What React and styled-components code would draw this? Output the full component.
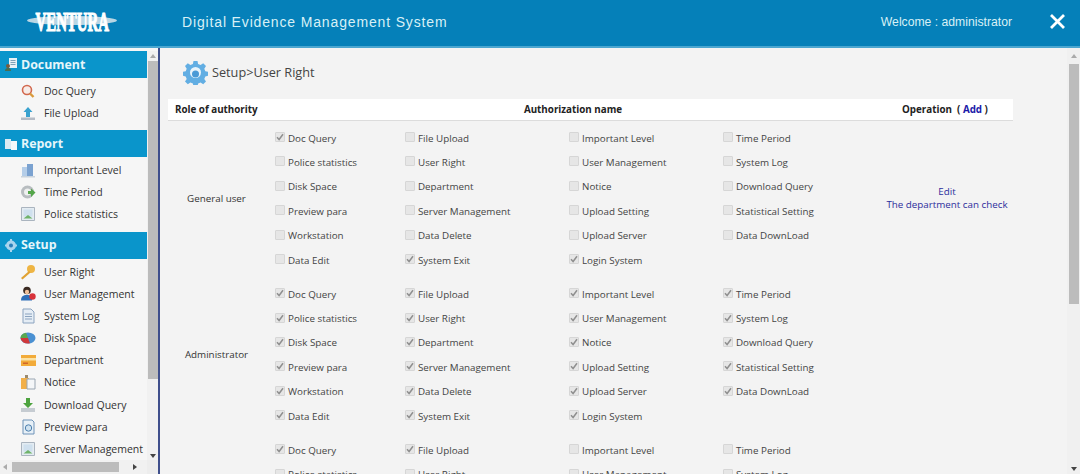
import React from 'react'
import styled, { createGlobalStyle } from 'styled-components'

const GlobalStyle = createGlobalStyle`
  html, body {
    margin: 0;
    height: 100%;
    overflow: hidden;
    background: #f3f3f3;
  }
  * {
    box-sizing: border-box;
  }
`

const Page = styled.div`
  width: 1080px;
  height: 474px;
  display: flex;
  flex-direction: column;
  overflow: hidden;
  font-family: "Open Sans", "Noto Sans", sans-serif;
  color: #333;
`

const Header = styled.header`
  height: 48px;
  flex-shrink: 0;
  display: flex;
  align-items: center;
  padding: 0 14px 3px 27px;
  background: #0580b9;
  border-bottom: 2px solid #4ba6d0;
  color: #d8f0f6;
`

const Logo = styled.div`
  position: relative;
  width: 90px;
  height: 22px;
  margin-right: 65px;
  display: flex;
  align-items: center;
  justify-content: center;

  &::before {
    content: '';
    position: absolute;
    left: 0;
    right: 0;
    top: 5px;
    height: 9px;
    border-radius: 50%;
    background: #b9d6e4;
  }
`

const LogoText = styled.span`
  position: relative;
  flex-shrink: 0;
  font-family: "Liberation Serif", serif;
  font-weight: bold;
  font-size: 28px;
  line-height: 22px;
  color: #fff;
  transform: scaleX(0.53);
  -webkit-text-stroke: 1.2px #fff;
`

const AppTitle = styled.h1`
  flex: 1;
  margin: 0;
  font-family: "Liberation Sans", sans-serif;
  font-size: 14px;
  font-weight: normal;
  letter-spacing: 0.85px;
`

const Welcome = styled.span`
  font-family: "Liberation Sans", sans-serif;
  font-size: 12.2px;
  margin-right: 37px;
`

const CloseIcon = styled.svg`
  width: 17px;
  height: 17px;
  display: block;
`

const Body = styled.div`
  flex: 1;
  min-height: 0;
  display: flex;
`

const Sidebar = styled.aside`
  width: 160px;
  flex-shrink: 0;
  display: grid;
  grid-template-columns: 147px 11px;
  grid-template-rows: 1fr 14px;
  border-right: 2px solid #3f4f8c;
  background: #f6f6f6;
  padding-top: 3px;
`

const SideList = styled.nav`
  overflow: hidden;
  min-height: 0;
`

const SectionHead = styled.div`
  height: 27px;
  display: flex;
  align-items: center;
  gap: 3px;
  padding: 0 0 1px 4px;
  background: #0a95cb;
  color: #e6f6fa;
  font-size: 12.4px;
  font-weight: 700;
`

const SectionBody = styled.div`
  padding: 1.5px 0 6.5px;
`

const SideItem = styled.div`
  height: 22.2px;
  display: flex;
  align-items: center;
  padding-left: 19px;
  gap: 7px;
  font-size: 10.5px;
  white-space: nowrap;
`

const ItemIcon = styled.svg`
  width: 18px;
  height: 16px;
  flex-shrink: 0;
  display: block;
`

const HeadIcon = styled.svg`
  width: 14px;
  height: 14px;
  flex-shrink: 0;
  display: block;
`

const VTrack = styled.div`
  display: flex;
  flex-direction: column;
  align-items: center;
  background: #f1f1f1;
`

const HTrack = styled.div`
  display: flex;
  align-items: center;
  background: #f1f1f1;
  padding: 0 7px 0 3px;
`

const VThumb = styled.div`
  width: 10px;
  height: ${p => p.$size}px;
  background: #bcbcbc;
  flex-shrink: 0;
`

const HThumb = styled.div`
  width: 107px;
  height: 10px;
  margin: 0 14px 0 5px;
  background: #bcbcbc;
`

const ArrowUp = styled.span`
  width: 0;
  height: 0;
  margin: ${p => p.$gap}px 0;
  border: 3px solid transparent;
  border-top: 0;
  border-bottom: 4px solid ${p => p.$dim ? '#aaa' : '#555'};
`

const ArrowDown = styled.span`
  width: 0;
  height: 0;
  margin-top: auto;
  margin-bottom: ${p => p.$gap}px;
  border: 3px solid transparent;
  border-bottom: 0;
  border-top: 4px solid #444;
`

const ArrowSide = styled.span`
  width: 0;
  height: 0;
  border: 3px solid transparent;
  ${p => p.$left
    ? 'border-left: 0; border-right: 4px solid #aaa;'
    : 'border-right: 0; border-left: 4px solid #444;'}
`

const Corner = styled.div`
  background: #ededed;
`

const Main = styled.main`
  flex: 1;
  min-width: 0;
  display: flex;
  background: #f3f3f3;
`

const Content = styled.div`
  width: 907px;
  flex-shrink: 0;
  padding: 0 0 0 8px;
  overflow: hidden;
`

const PageTitle = styled.div`
  height: 51px;
  display: flex;
  align-items: center;
  gap: 4px;
  padding: 0 0 3px 15px;
  font-size: 12.7px;
  color: #444;
`

const GearIcon = styled.svg`
  width: 25px;
  height: 25px;
  display: block;
`

const Table = styled.div`
  width: 845px;
`

const TableHead = styled.div`
  height: 22px;
  display: grid;
  grid-template-columns: 97px 616px 132px;
  align-items: center;
  background: #fff;
  border-bottom: 1px solid #dcdcdc;
  font-size: 9.8px;
  font-weight: 700;
  color: #222;
  white-space: nowrap;
`

const HeadCell = styled.div`
  text-align: ${p => p.$left ? 'left' : 'center'};
  padding-left: ${p => p.$left ? '7px' : '0'};
  padding-right: ${p => p.$inset || 0}px;
`

const AddLink = styled.span`
  color: #1a1aa8;
`

const Group = styled.div`
  display: grid;
  grid-template-columns: 97px 616px 132px;
  align-items: center;
  padding: 4.9px 0;

  &:first-of-type {
    padding-top: 6px;
  }
`

const RoleName = styled.div`
  text-align: center;
  font-size: 9.8px;
  padding-bottom: 2px;
`

const PermGrid = styled.div`
  display: grid;
  grid-template-columns: 130px 164px 154px 158px;
  grid-auto-rows: 24.4px;
  padding-left: 10px;
`

const Perm = styled.label`
  display: flex;
  align-items: center;
  gap: 3px;
  font-size: 9.8px;
  color: #444;
  white-space: nowrap;
`

const Box = styled.span`
  width: 10px;
  height: 10px;
  margin-top: -2px;
  flex-shrink: 0;
  display: flex;
  align-items: center;
  justify-content: center;
  background: #e6e6e6;
  border: 1px solid #d6d6d6;
  border-radius: 1px;
`

const OpCell = styled.div`
  text-align: center;
  font-size: 9.8px;
  line-height: 13.5px;
  color: #2d2d9c;
  padding-bottom: 2px;
`

const MainScroll = styled(VTrack)`
  flex: 1;
  background: #f0f0f0;
`

const Check = () => (
  <svg width="8" height="8" viewBox="0 0 8 8">
    <path d="M1 4.2 3.1 6.5 7 1.2" fill="none" stroke="#8f8f8f" strokeWidth="1.5" />
  </svg>
)

const icons = {
  search: <><circle cx="8" cy="7" r="4.5" fill="#f7ece8" stroke="#d2694f" strokeWidth="1.6" /><path d="M11 10.5 14.5 14" stroke="#d99a3c" strokeWidth="2.4" /></>,
  upload: <><path d="M2 12.500h14V15H2z" fill="#b5bcc6" /><path d="M9 2 13.500 7H11v5H7V7H4.500z" fill="#3aa2cf" /></>,
  bars: <><path d="M3 5h5v10H3z" fill="#b4cde8" /><path d="M8 2h6v13H8z" fill="#7ba2d0" /><path d="M2 14h14v1.500H2z" fill="#c9d3dd" /></>,
  clock: <><circle cx="8.500" cy="8" r="6.500" fill="#b8bdc0" /><circle cx="8.500" cy="8" r="3.500" fill="#eef0ef" /><path d="M9 7h3V4.500L16.500 8.500 12 13v-3H9z" fill="#55a64a" /></>,
  picture: <><path d="M2.500 1.500h13v13h-13z" fill="#e4ecf2" stroke="#aab4bf" /><path d="M4.500 3.500h9v7h-9z" fill="#cfe0ee" /><path d="M4.500 12.500 9 9l4.500 3.500z" fill="#6fb36b" /></>,
  key: <><circle cx="12" cy="5" r="4" fill="#eeb544" /><path d="M10 7 2 14 3.500 15.500 11.500 8.500z" fill="#e0a233" /></>,
  users: <><circle cx="8" cy="4.500" r="3.800" fill="#3a2a22" /><circle cx="8" cy="6" r="2.200" fill="#f0c09a" /><path d="M2 14.500c0-4 2-5.500 6-5.500s5 1.500 5 5.500z" fill="#2f6fb8" /><circle cx="13.500" cy="10.500" r="3.200" fill="#d8323a" /></>,
  doc: <><path d="M4 1h8l3 3v11H4z" fill="#e5edf5" stroke="#8ba3bf" /><path d="M6 6h7M6 8.500h7M6 11h7" stroke="#8ba3bf" /></>,
  pie: <><ellipse cx="9" cy="8" rx="7.500" ry="5.500" fill="#4a90d2" /><path d="M9 8 1.500 8A7.500 5.500 0 0 1 7 2.700z" fill="#5aa84f" /><path d="M9 8 1.500 8A7.500 5.500 0 0 0 11 13.300z" fill="#d0383a" /></>,
  card: <><path d="M2 3h15v11H2z" fill="#f2ab3a" /><path d="M2 6h15v2.500H2z" fill="#fbe2a5" /><path d="M4 10.500h5V12H4z" fill="#d1662a" /></>,
  notice: <><path d="M2 4h8v11H2z" fill="#f2b04a" /><path d="M8 5h8v10H8z" fill="#f4f6f8" stroke="#9aa6b2" /><path d="M6 1h3v3H6z" fill="#9a8a70" /></>,
  download: <><path d="M2 11h14v4H2z" fill="#c6ccd2" /><path d="M7 1h4v5h3l-5 5-5-5h3z" fill="#4da33f" /></>,
  preview: <><path d="M4 1h9l2 2v12H4z" fill="#e7f0f7" stroke="#6e93b8" /><circle cx="9.500" cy="9" r="3.200" fill="#cfe2f0" stroke="#4c7fae" /></>,
}

const headIcons = {
  doc: <><path d="M5 1h8v10H5z" fill="#e8f1f6" /><path d="M6.500 3.500h5M6.500 5.500h5M6.500 7.500h5" stroke="#7fa2b8" /><circle cx="4" cy="9" r="2" fill="#7a5a3a" /><path d="M1 14c0-2 1-3 3-3s3 1 3 3z" fill="#4a6c50" /></>,
  report: <><path d="M1 3h6v10H1z" fill="#dbeaf2" /><path d="M7 5h6v9H7z" fill="#f3f8fa" /></>,
  gear: <><circle cx="7" cy="7.500" r="5" fill="#a9d5ee" /><circle cx="7" cy="7.500" r="2" fill="#2b7fb8" /><path d="M6 1h2v2H6zM6 12h2v2H6zM1 6.500h2v2H1zM11 6.500h2v2h-2z" fill="#a9d5ee" /></>,
}

const menu = [
  { title: 'Document', head: 'doc', items: [['Doc Query', 'search'], ['File Upload', 'upload']] },
  { title: 'Report', head: 'report', items: [['Important Level', 'bars'], ['Time Period', 'clock'], ['Police statistics', 'picture']] },
  {
    title: 'Setup',
    head: 'gear',
    items: [
      ['User Right', 'key'], ['User Management', 'users'], ['System Log', 'doc'], ['Disk Space', 'pie'],
      ['Department', 'card'], ['Notice', 'notice'], ['Download Query', 'download'], ['Preview para', 'preview'],
      ['Server Management', 'picture'],
    ],
  },
]

const permNames = [
  'Doc Query', 'File Upload', 'Important Level', 'Time Period',
  'Police statistics', 'User Right', 'User Management', 'System Log',
  'Disk Space', 'Department', 'Notice', 'Download Query',
  'Preview para', 'Server Management', 'Upload Setting', 'Statistical Setting',
  'Workstation', 'Data Delete', 'Upload Server', 'Data DownLoad',
  'Data Edit', 'System Exit', 'Login System',
]

const roles = [
  { name: 'General user', edit: true, checked: ['Doc Query', 'System Exit', 'Login System'] },
  { name: 'Administrator', checked: permNames },
  { name: '', checked: ['Doc Query', 'File Upload'] },
]

export default function App() {
  return (
    <Page>
      <GlobalStyle />
      <Header>
        <Logo><LogoText>VENTURA</LogoText></Logo>
        <AppTitle>Digital Evidence Management System</AppTitle>
        <Welcome>Welcome : administrator</Welcome>
        <CloseIcon viewBox="0 0 17 17">
          <path d="M2 2 15 15M15 2 2 15" stroke="#fff" strokeWidth="2.8" fill="none" />
        </CloseIcon>
      </Header>
      <Body>
        <Sidebar>
          <SideList>
            {menu.map(section => (
              <div key={section.title}>
                <SectionHead>
                  <HeadIcon viewBox="0 0 14 14">{headIcons[section.head]}</HeadIcon>
                  {section.title}
                </SectionHead>
                <SectionBody>
                  {section.items.map(([label, icon]) => (
                    <SideItem key={label}>
                      <ItemIcon viewBox="0 0 18 16">{icons[icon]}</ItemIcon>
                      {label}
                    </SideItem>
                  ))}
                </SectionBody>
              </div>
            ))}
          </SideList>
          <VTrack>
            <ArrowUp $gap={3} $dim />
            <VThumb $size={318} />
            <ArrowDown $gap={2} />
          </VTrack>
          <HTrack>
            <ArrowSide $left />
            <HThumb />
            <ArrowSide />
          </HTrack>
          <Corner />
        </Sidebar>
        <Main>
          <Content>
            <PageTitle>
              <GearIcon viewBox="0 0 25 25">
                <path d="M10.500 1h4l.6 3 2.500 1 2.600-1.700 2.800 2.800-1.700 2.600 1 2.500 3 .6v4l-3 .6-1 2.500 1.700 2.600-2.800 2.800-2.600-1.700-2.500 1-.6 3h-4l-.6-3-2.500-1-2.600 1.700-2.800-2.800 1.700-2.600-1-2.500-3-.6v-4l3-.6 1-2.500-1.700-2.600 2.800-2.800 2.600 1.700 2.500-1z" fill="#62aee3" />
                <circle cx="12.500" cy="12.500" r="5.500" fill="#e9f4fb" />
                <circle cx="12.500" cy="14" r="3.500" fill="#4a9ad6" />
              </GearIcon>
              Setup&gt;User Right
            </PageTitle>
            <Table>
              <TableHead>
                <HeadCell $left>Role of authority</HeadCell>
                <HeadCell>Authorization name</HeadCell>
                <HeadCell $inset={4}>Operation&nbsp;&nbsp;( <AddLink>Add</AddLink> )</HeadCell>
              </TableHead>
              {roles.map((role, i) => (
                <Group key={i}>
                  <RoleName>{role.name}</RoleName>
                  <PermGrid>
                    {permNames.map(perm => (
                      <Perm key={perm}>
                        <Box>{role.checked.includes(perm) && <Check />}</Box>
                        {perm}
                      </Perm>
                    ))}
                  </PermGrid>
                  <OpCell>
                    {role.edit && <>Edit<br />The department can check</>}
                  </OpCell>
                </Group>
              ))}
            </Table>
          </Content>
          <MainScroll>
            <ArrowUp $gap={6} $dim />
            <VThumb $size={240} />
            <ArrowDown $gap={3} />
          </MainScroll>
        </Main>
      </Body>
    </Page>
  )
}
